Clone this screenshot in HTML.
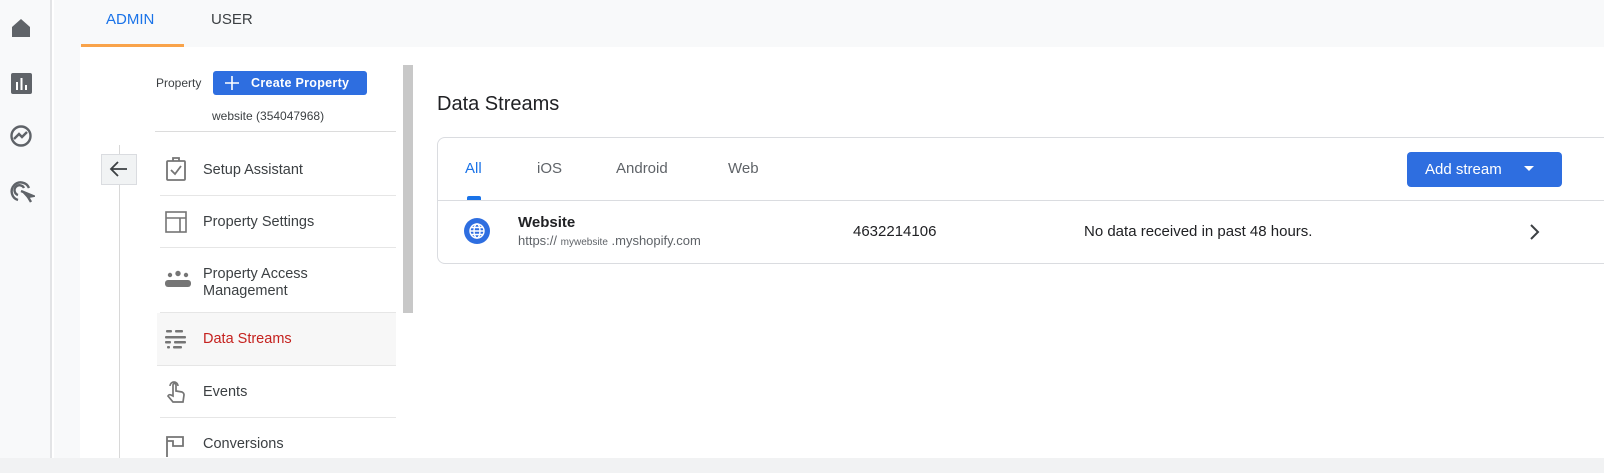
<!DOCTYPE html>
<html><head><style>
*{margin:0;padding:0;box-sizing:border-box}
body{width:1604px;height:473px;overflow:hidden;background:#fff;font-family:"Liberation Sans",Arial,sans-serif;color:#202124;position:relative}
.a{position:absolute}
.rail{left:0;top:0;width:52px;height:473px;background:#f8f9fa;border-right:2px solid #e3e4e6}
.top{left:54px;top:0;width:1550px;height:47px;background:#f8f9fa}
.gut{left:54px;top:0;width:26px;height:473px;background:#f8f9fa}
.bot{left:0;top:458px;width:1604px;height:15px;background:#f1f2f3}
.item{left:160px;width:236px;height:52px;border-bottom:1px solid #e6e6e6;font-size:14.5px;color:#3c4043}
.item span{position:absolute;left:43px}
.item svg{position:absolute;left:5px}
</style></head><body>
<div class="a rail"></div>
<div class="a top"></div>
<div class="a gut"></div>
<div class="a bot"></div>
<!-- rail icons -->
<svg class="a" style="left:10px;top:17px" width="22" height="22" viewBox="0 0 22 22"><path d="M2 10L11 2L20 10V20H2Z" fill="#5f6368"/></svg>
<svg class="a" style="left:11px;top:73px" width="21" height="21" viewBox="0 0 21 21"><rect x="0" y="0" width="21" height="21" rx="2" fill="#5f6368"/><rect x="5" y="9" width="2" height="8" fill="#fff"/><rect x="9.5" y="5" width="2" height="12" fill="#fff"/><rect x="14" y="12" width="2" height="5" fill="#fff"/></svg>
<svg class="a" style="left:9px;top:124px" width="24" height="24" viewBox="0 0 24 24" fill="none" stroke="#5f6368" stroke-width="2.4"><circle cx="12" cy="12" r="9.5"/><path d="M5 15L10 10L13 13L18 8"/></svg>
<svg class="a" style="left:9px;top:179px" width="26" height="26" viewBox="0 0 26 26" fill="none" stroke="#5f6368" stroke-width="2.4"><path d="M20 9A9 9 0 1 0 9 21"/><path d="M15 9A5 5 0 1 0 9 16"/><path d="M12 12L24 17L19 18L22 23" fill="#5f6368"/></svg>
<!-- tabs -->
<div class="a" style="left:106px;top:11px;font-size:15px;color:#1a73e8">ADMIN</div>
<div class="a" style="left:211px;top:11px;font-size:15px;color:#3c4043">USER</div>
<div class="a" style="left:81px;top:44px;width:103px;height:3px;background:#f9a34a"></div>
<!-- property -->
<div class="a" style="left:156px;top:76px;font-size:12px;color:#3c4043">Property</div>
<div class="a" style="left:213px;top:71px;width:154px;height:24px;background:#2e6ee0;border-radius:3px;color:#fff;font-size:12.5px;font-weight:bold;line-height:24px;padding-left:38px;letter-spacing:.3px">Create Property</div>
<svg class="a" style="left:224px;top:75px" width="16" height="16"><path d="M8 1V15M1 8H15" stroke="#fff" stroke-width="1.6"/></svg>
<div class="a" style="left:212px;top:109px;font-size:12px;color:#3c4043">website (354047968)</div>
<div class="a" style="left:155px;top:131px;width:241px;height:1px;background:#dcdcdc"></div>
<div class="a" style="left:119px;top:145px;width:1px;height:313px;background:#d8d8d8"></div>
<div class="a" style="left:101px;top:154px;width:36px;height:31px;background:#f1f3f4;border:1px solid #dadce0"></div>
<svg class="a" style="left:108px;top:158px" width="22" height="22" viewBox="0 0 22 22" fill="none" stroke="#3c4043" stroke-width="1.8"><path d="M19 11H3M10 4L3 11L10 18"/></svg>
<div class="a" style="left:403px;top:65px;width:10px;height:248px;background:#c8c8c8"></div>
<!-- items -->
<div class="a item" style="top:144px;height:52px"><svg style="top:13px" width="22" height="26" viewBox="0 0 22 26" fill="none" stroke="#757575" stroke-width="1.8"><rect x="2" y="4" width="18" height="19" rx="1"/><path d="M8 4V1H14V4"/><path d="M6 13L10 17L16 9"/></svg><span style="top:18px">Setup Assistant</span></div>
<div class="a item" style="top:196px"><svg style="top:15px" width="22" height="22" viewBox="0 0 22 22" fill="none" stroke="#757575" stroke-width="1.6"><rect x="1" y="1" width="20" height="20"/><path d="M1 7H21M15 7V21"/></svg><span style="top:18px">Property Settings</span></div>
<div class="a item" style="top:248px;height:65px"><svg style="top:22px" width="26" height="20" viewBox="0 0 26 20" fill="#757575"><circle cx="5" cy="5" r="2.2"/><circle cx="13" cy="3.5" r="2.7"/><circle cx="21" cy="5" r="2.2"/><rect x="0" y="10" width="26" height="7" rx="3"/></svg><span style="top:18px;line-height:17px">Property Access<br>Management</span></div>
<div class="a item" style="top:313px;height:53px;background:#f7f7f7;left:157px;width:239px"><svg style="top:16px;left:8px" width="22" height="22" viewBox="0 0 22 22" fill="#757575"><rect x="1" y="1" width="6" height="2.5" rx="1"/><rect x="10" y="1" width="8" height="2.5" rx="1"/><rect x="0" y="7" width="21" height="2.5" rx="1"/><rect x="0" y="12" width="6" height="2.5" rx="1"/><rect x="9" y="12" width="12" height="2.5" rx="1"/><rect x="2" y="17" width="3" height="2.5" rx="1"/><rect x="8" y="17" width="9" height="2.5" rx="1"/></svg><span style="top:18px;left:46px;color:#c5221f">Data Streams</span></div>
<div class="a item" style="top:366px"><svg style="top:12px" width="22" height="26" viewBox="0 0 22 26" fill="none" stroke="#757575" stroke-width="1.7"><path d="M5 8A4 4 0 1 1 13 8"/><path d="M8 18V7A1.5 1.5 0 0 1 11 7V13L17 14Q19 15 19 17L18 24H8L3 18Q4 16 6 17Z"/></svg><span style="top:18px">Events</span></div>
<div class="a item" style="top:418px;border:none"><svg style="top:17px" width="20" height="22" viewBox="0 0 20 22" fill="none" stroke="#757575" stroke-width="1.8"><path d="M2 22V2H18V11H8V6H2"/></svg><span style="top:18px">Conversions</span></div>
<!-- main -->
<div class="a" style="left:437px;top:93px;font-size:20px;color:#202124">Data Streams</div>
<div class="a" style="left:437px;top:137px;width:1180px;height:127px;border:1px solid #dadce0;border-radius:8px"></div>
<div class="a" style="left:438px;top:200px;width:1166px;height:1px;background:#dadce0"></div>
<div class="a" style="left:465px;top:160px;font-size:15px;color:#1a73e8">All</div>
<div class="a" style="left:467px;top:196px;width:14px;height:4px;background:#1a73e8;border-radius:2px 2px 0 0"></div>
<div class="a" style="left:537px;top:160px;font-size:15px;color:#5f6368">iOS</div>
<div class="a" style="left:616px;top:160px;font-size:15px;color:#5f6368">Android</div>
<div class="a" style="left:728px;top:160px;font-size:15px;color:#5f6368">Web</div>
<div class="a" style="left:1407px;top:152px;width:155px;height:35px;background:#2e6ee0;border-radius:4px;color:#fff;font-size:15px;line-height:35px;padding-left:18px">Add stream</div>
<svg class="a" style="left:1524px;top:166px" width="10" height="6"><path d="M0 0H10L5 5Z" fill="#fff"/></svg>
<svg class="a" style="left:464px;top:218px" width="26" height="26" viewBox="0 0 26 26"><circle cx="13" cy="13" r="13" fill="#2e6ee0"/><g fill="none" stroke="#fff" stroke-width="1.4"><circle cx="13" cy="13" r="7"/><ellipse cx="13" cy="13" rx="3" ry="7"/><path d="M6 13H20M7 9.5H19M7 16.5H19"/></g></svg>
<div class="a" style="left:518px;top:214px;font-size:15px;font-weight:bold;color:#202124">Website</div>
<div class="a" style="left:518px;top:233px;font-size:13px;color:#5f6368">https:// <span style="font-size:10px">mywebsite</span> .myshopify.com</div>
<div class="a" style="left:853px;top:223px;font-size:15px;color:#202124">4632214106</div>
<div class="a" style="left:1084px;top:223px;font-size:15px;color:#202124">No data received in past 48 hours.</div>
<svg class="a" style="left:1529px;top:223px" width="12" height="18" viewBox="0 0 12 18"><path d="M2 2L9 9L2 16" fill="none" stroke="#3c4043" stroke-width="2"/></svg>
</body></html>
